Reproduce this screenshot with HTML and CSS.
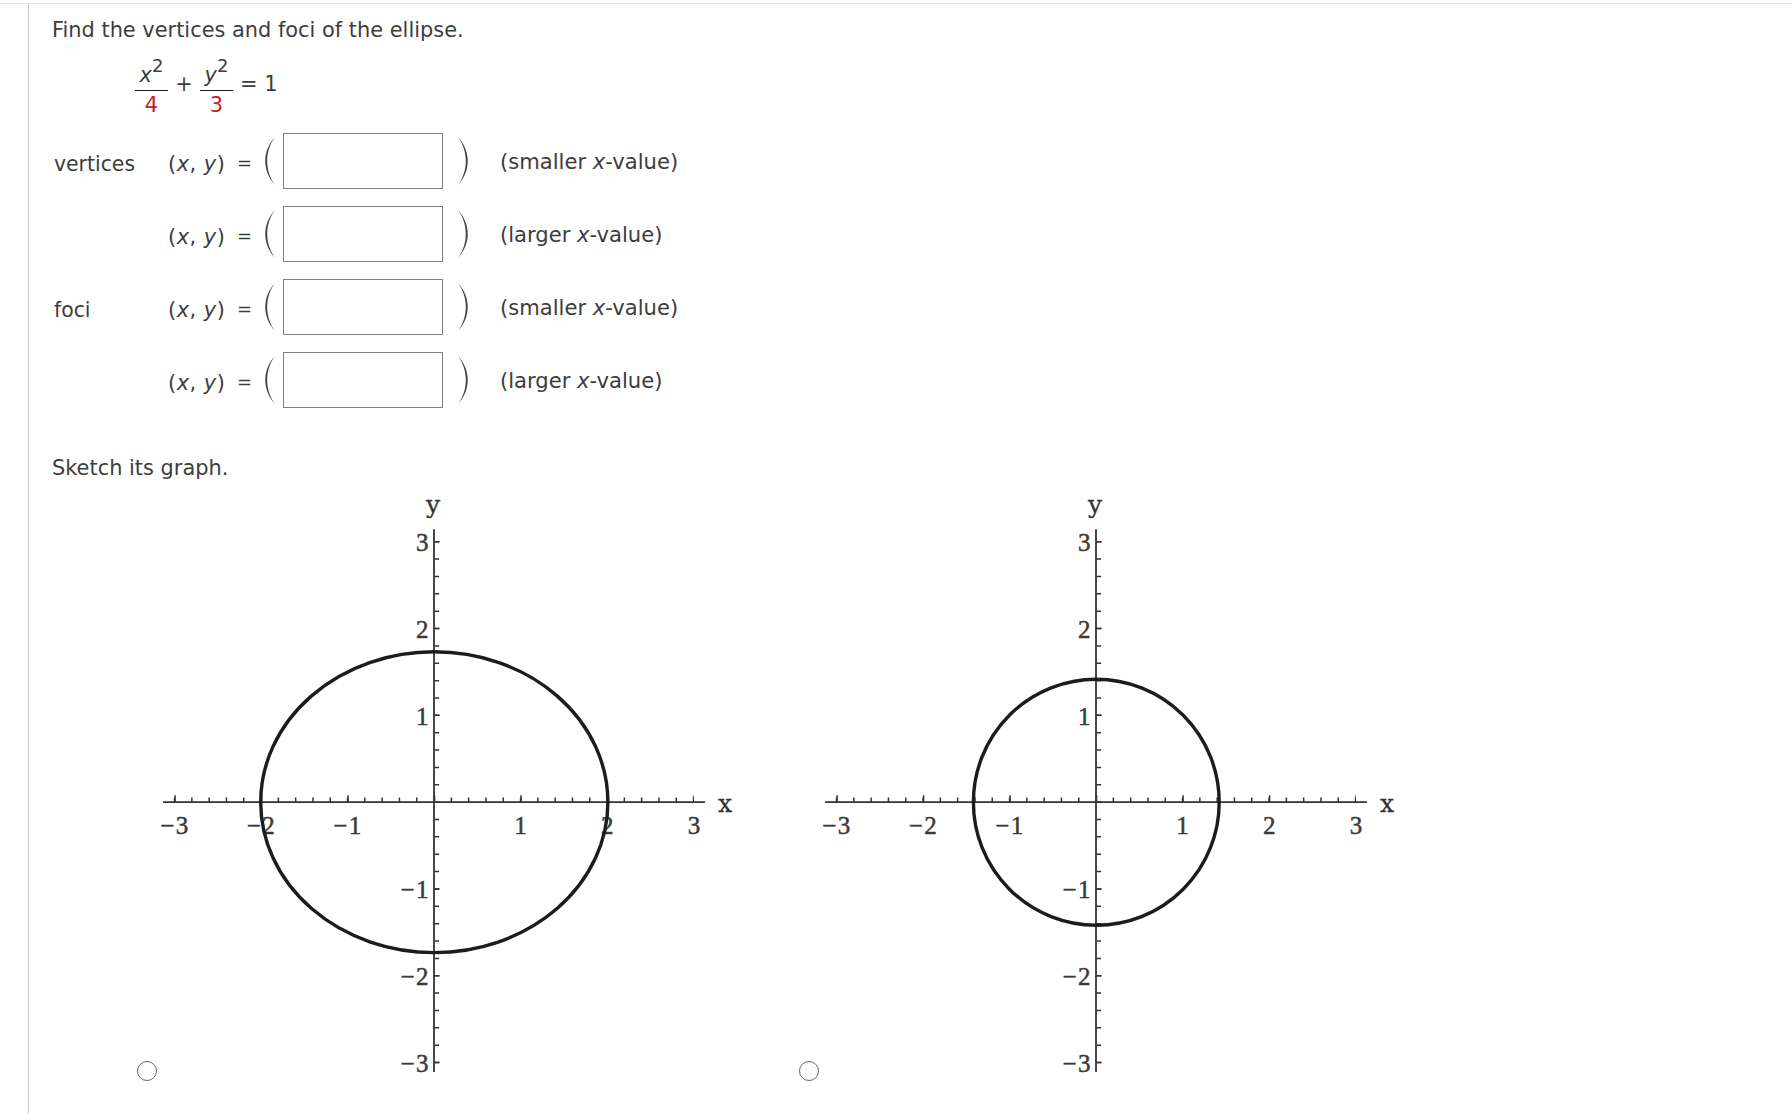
FILE: index.html
```html
<!DOCTYPE html>
<html lang="en">
<head>
    <meta charset="UTF-8">
    <title>Vertices and Foci of an Ellipse</title>
    <link rel="stylesheet" href="styles.css">
</head>
<body>
    <svg class="defs" width="0" height="0">
        <defs>
            <path id="paren-left" d="M11 0C-2 14 -2 34 11 48C0.6 34 0.6 14 11 0Z"/>
            <path id="paren-right" d="M1 0C14 14 14 34 1 48C11.4 34 11.4 14 1 0Z"/>
            <g id="axes">
                <line class="axis" x1="6" y1="312.2" x2="548" y2="312.2"/>
                <line class="axis" x1="277" y1="39.3" x2="277" y2="582"/>
                <line class="tick" x1="16.8" y1="309.9" x2="537" y2="309.9" stroke-width="4.6" stroke-dasharray="1.5 15.8"/>
                <line class="tick" x1="17.3" y1="308.7" x2="537" y2="308.7" stroke-width="7" stroke-dasharray="1.5 85"/>
                <line class="tick" x1="279.9" y1="51" x2="279.9" y2="575" stroke-width="4.4" stroke-dasharray="1.5 15.86"/>
                <line class="tick" x1="279.8" y1="51" x2="279.8" y2="575" stroke-width="5.6" stroke-dasharray="1.5 85.3"/>
                <text class="num neg" x="18" y="343.5">&#8722;3</text>
                <text class="num neg" x="104.5" y="343.5">&#8722;2</text>
                <text class="num neg" x="191" y="343.5">&#8722;1</text>
                <text class="num" x="363.5" y="343.5">1</text>
                <text class="num" x="450.3" y="343.5">2</text>
                <text class="num" x="537" y="343.5">3</text>
                <text class="num num-y" x="271.5" y="61">3</text>
                <text class="num num-y" x="271.5" y="148">2</text>
                <text class="num num-y" x="271.5" y="235">1</text>
                <text class="num num-y neg" x="273" y="408">&#8722;1</text>
                <text class="num num-y neg" x="273" y="495">&#8722;2</text>
                <text class="num num-y neg" x="273" y="582">&#8722;3</text>
                <text class="axis-name" x="276" y="23">y</text>
                <text class="axis-name" x="568" y="321.6">x</text>
            </g>
        </defs>
    </svg>

    <div class="page">
        <main class="question">
            <p class="prompt">Find the vertices and foci of the ellipse.</p>

            <div class="equation">
                <span class="fraction">
                    <span class="numerator"><i>x</i><sup>2</sup></span>
                    <span class="denominator">4</span>
                </span>
                <span class="plus">+</span>
                <span class="fraction">
                    <span class="numerator"><i>y</i><sup>2</sup></span>
                    <span class="denominator">3</span>
                </span>
                <span class="equals-one">= 1</span>
            </div>

            <div class="answers">
                <div class="answer-row">
                    <span class="row-label">vertices</span>
                    <span class="point"><span class="pair">(<i>x</i>, <i>y</i>)</span><span class="eq">=</span></span>
                    <svg class="paren" width="12" height="48" viewBox="0 0 12 48"><use href="#paren-left"/></svg>
                    <input class="answer-box" type="text">
                    <svg class="paren paren-close" width="12" height="48" viewBox="0 0 12 48"><use href="#paren-right"/></svg>
                    <span class="hint">(smaller <i>x</i>-value)</span>
                </div>
                <div class="answer-row">
                    <span class="row-label"></span>
                    <span class="point"><span class="pair">(<i>x</i>, <i>y</i>)</span><span class="eq">=</span></span>
                    <svg class="paren" width="12" height="48" viewBox="0 0 12 48"><use href="#paren-left"/></svg>
                    <input class="answer-box" type="text">
                    <svg class="paren paren-close" width="12" height="48" viewBox="0 0 12 48"><use href="#paren-right"/></svg>
                    <span class="hint">(larger <i>x</i>-value)</span>
                </div>
                <div class="answer-row">
                    <span class="row-label">foci</span>
                    <span class="point"><span class="pair">(<i>x</i>, <i>y</i>)</span><span class="eq">=</span></span>
                    <svg class="paren" width="12" height="48" viewBox="0 0 12 48"><use href="#paren-left"/></svg>
                    <input class="answer-box" type="text">
                    <svg class="paren paren-close" width="12" height="48" viewBox="0 0 12 48"><use href="#paren-right"/></svg>
                    <span class="hint">(smaller <i>x</i>-value)</span>
                </div>
                <div class="answer-row">
                    <span class="row-label"></span>
                    <span class="point"><span class="pair">(<i>x</i>, <i>y</i>)</span><span class="eq">=</span></span>
                    <svg class="paren" width="12" height="48" viewBox="0 0 12 48"><use href="#paren-left"/></svg>
                    <input class="answer-box" type="text">
                    <svg class="paren paren-close" width="12" height="48" viewBox="0 0 12 48"><use href="#paren-right"/></svg>
                    <span class="hint">(larger <i>x</i>-value)</span>
                </div>
            </div>

            <p class="prompt sketch">Sketch its graph.</p>

            <div class="graphs">
                <label class="choice">
                    <input class="choice-radio" type="radio" name="graph">
                    <svg class="graph" width="590" height="597" viewBox="0 0 590 597">
                        <use href="#axes"/>
                        <ellipse class="curve" cx="277.3" cy="312.2" rx="173.6" ry="150.4"/>
                    </svg>
                </label>
                <label class="choice">
                    <input class="choice-radio" type="radio" name="graph">
                    <svg class="graph" width="590" height="597" viewBox="0 0 590 597">
                        <use href="#axes"/>
                        <ellipse class="curve" cx="277.3" cy="312.2" rx="122.9" ry="123"/>
                    </svg>
                </label>
            </div>
        </main>
    </div>
</body>
</html>
```

FILE: styles.css
```css
body {
    margin: 0;
    font-family: "DejaVu Sans", sans-serif;
    font-size: 20.9px;
    color: #3d3d3d;
    background-color: #fff;
}

.defs {
    display: block;
    height: 0;
}

.page {
    margin-top: 3px;
    border-top: 1px solid #e4e4e4;
}

.question {
    box-sizing: border-box;
    min-height: 1110px;
    margin-left: 28px;
    padding: 14px 0 0 23px;
    border-left: 1px solid #cfcfcf;
}

.prompt {
    margin: 0;
    line-height: 24px;
}

.equation {
    display: flex;
    align-items: flex-start;
    margin: 17px 0 0 83px;
    height: 62px;
}

.fraction {
    display: flex;
    flex-direction: column;
    align-items: center;
    width: 33px;
}

.numerator {
    width: 100%;
    height: 31px;
    line-height: 32px;
    text-align: center;
    border-bottom: 1px solid #222;
}

.numerator sup {
    font-size: 18px;
    line-height: 0;
    vertical-align: 10px;
}

.denominator {
    line-height: 28px;
    color: #c4201a;
}

.plus {
    width: 32px;
    margin-top: 13px;
    line-height: 24px;
    text-align: center;
}

.equals-one {
    margin: 13px 0 0 7px;
    line-height: 24px;
}

.answers {
    display: flex;
    flex-direction: column;
    gap: 17px;
    margin-top: 12px;
}

.answer-row {
    display: flex;
    align-items: center;
    height: 56px;
}

.row-label {
    box-sizing: border-box;
    width: 115px;
    padding: 6px 0 0 2px;
    font-size: 20.4px;
}

.point {
    box-sizing: border-box;
    display: flex;
    justify-content: space-between;
    width: 85px;
    padding: 6px 0 0 1px;
}

.pair {
    letter-spacing: 0.5px;
}

.eq {
    font-size: 18px;
}

.paren {
    flex: none;
    margin-left: 12px;
    fill: #444;
}

.answer-box {
    box-sizing: border-box;
    width: 160px;
    height: 56px;
    margin: 0 0 0 7px;
    padding: 0;
    border: 1px solid #808080;
    background-color: #fff;
}

.paren-close {
    margin-left: 14px;
}

.hint {
    margin-left: 31px;
    font-size: 21.1px;
}

.sketch {
    margin-top: 48px;
}

.graphs {
    display: flex;
    gap: 52px;
    margin-top: 10px;
    padding-left: 85px;
}

.choice {
    display: flex;
    flex: none;
    align-items: flex-end;
    width: 610px;
}

.choice-radio {
    appearance: none;
    box-sizing: border-box;
    flex: none;
    width: 20px;
    height: 20px;
    margin: 0 0 6px;
    border: 1.5px solid #666;
    border-radius: 50%;
    background-color: #fff;
}

.graph {
    flex: none;
}

.axis {
    stroke: #333;
    stroke-width: 1.8;
}

.tick {
    stroke: #333;
}

.num {
    font-family: "Liberation Serif", serif;
    font-size: 25px;
    fill: #3a3a3a;
    stroke: #3a3a3a;
    stroke-width: 0.5;
    text-anchor: middle;
}

.num-y {
    text-anchor: end;
}

.neg {
    letter-spacing: 1.5px;
}

.axis-name {
    font-family: "DejaVu Serif", serif;
    font-size: 25px;
    fill: #333;
    stroke: #333;
    stroke-width: 0.3;
    text-anchor: middle;
}

.curve {
    fill: none;
    stroke: #1c1c1c;
    stroke-width: 3.4;
}
```
